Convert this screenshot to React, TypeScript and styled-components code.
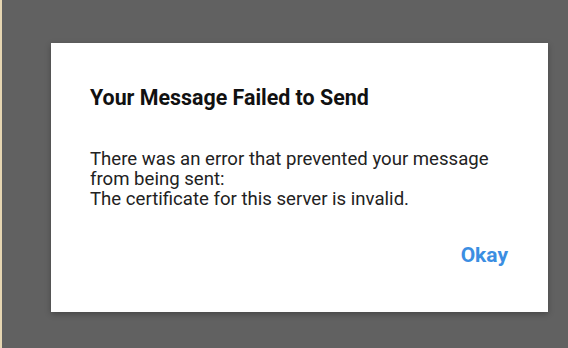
import * as React from 'react';
import styled, { createGlobalStyle } from 'styled-components';

const GlobalStyle = createGlobalStyle`
  html, body {
    margin: 0;
    padding: 0;
  }
  body {
    font-family: Roboto, 'Liberation Sans', sans-serif;
  }
`;

const Backdrop = styled.div`
  box-sizing: border-box;
  width: 568px;
  height: 348px;
  background-color: #616161;
  border-left: 2px solid #e6d6b2;
  padding: 43px 0 0 49px;
  display: flex;
  align-items: flex-start;
`;

const Dialog = styled.div`
  box-sizing: border-box;
  width: 497px;
  height: 269px;
  background-color: #ffffff;
  box-shadow: 0 2px 6px rgba(0, 0, 0, 0.28);
  padding: 43px 40px 0 39px;
  display: flex;
  flex-direction: column;
`;

const Title = styled.h2`
  margin: 0;
  font-size: 21.4px;
  line-height: 24px;
  font-weight: 700;
  color: #111111;
`;

const Message = styled.p`
  margin: 39px 0 0;
  font-size: 18.6px;
  line-height: 20px;
  font-weight: 400;
  color: #222222;
`;

const Actions = styled.div`
  display: flex;
  justify-content: flex-end;
  margin-top: 34px;
`;

const TextButton = styled.button`
  border: none;
  background: none;
  padding: 0;
  font-family: inherit;
  font-size: 21px;
  line-height: 24px;
  font-weight: 700;
  color: #3b8ee2;
  cursor: pointer;
`;

export default function App() {
  return (
    <>
      <GlobalStyle />
      <Backdrop>
        <Dialog role="alertdialog">
          <Title>Your Message Failed to Send</Title>
          <Message>
            There was an error that prevented your message
            <br />
            from being sent:
            <br />
            The certificate for this server is invalid.
          </Message>
          <Actions>
            <TextButton>Okay</TextButton>
          </Actions>
        </Dialog>
      </Backdrop>
    </>
  );
}
